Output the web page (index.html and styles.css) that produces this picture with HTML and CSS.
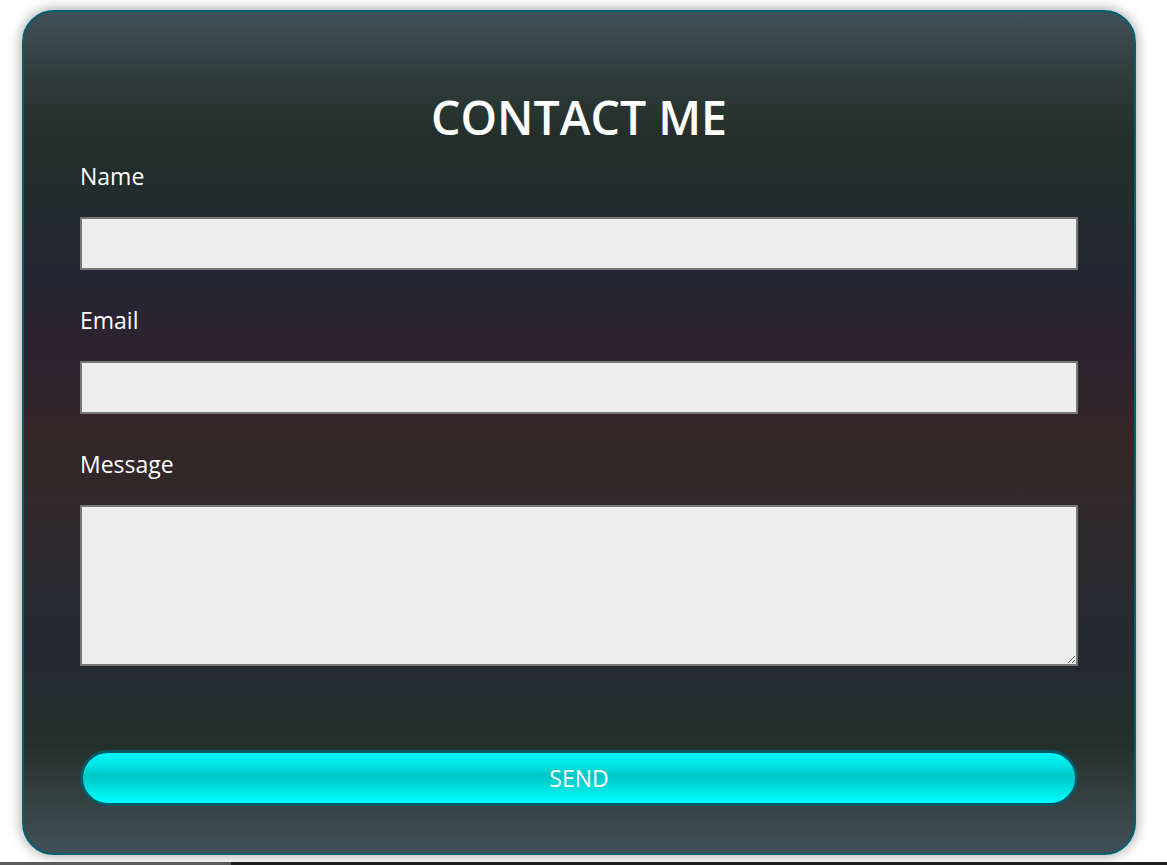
FILE: index.html
```html
<!DOCTYPE html>
<html lang="en">
<head>
<meta charset="utf-8">
<title>Contact Me</title>
<link rel="stylesheet" href="styles.css">
</head>
<body>
<main class="page">
  <form class="contact-card" action="#" onsubmit="return false">
    <h2 class="contact-title">CONTACT ME</h2>
    <div class="field">
      <label class="field-label" for="name">Name</label>
      <input class="field-input" id="name" type="text">
    </div>
    <div class="field">
      <label class="field-label" for="email">Email</label>
      <input class="field-input" id="email" type="email">
    </div>
    <div class="field">
      <label class="field-label" for="message">Message</label>
      <textarea class="field-input field-area" id="message"></textarea>
    </div>
    <button class="send-btn" type="submit">SEND</button>
  </form>
  <div class="track"><div class="track-thumb"></div></div>
</main>
</body>
</html>
```
FILE: styles.css
```css
html, body {
  margin: 0;
  padding: 0;
  background: #ffffff;
}

body {
  font-family: "Open Sans", "Noto Sans", sans-serif;
  overflow: hidden;
}

.page {
  display: flex;
  flex-direction: column;
  padding-top: 10px;
}

.contact-card {
  box-sizing: border-box;
  width: 1114px;
  height: 845px;
  margin-left: 22px;
  padding: 76px 56px 47px;
  display: flex;
  flex-direction: column;
  border: 2px solid #006070;
  border-radius: 32px;
  box-shadow: 0 0 12px 2px rgba(0, 0, 0, 0.3);
  background: linear-gradient(to bottom,
    #415059 0%,
    #2f3c3a 8%,
    #232e29 15%,
    #222b2d 24%,
    #242733 31%,
    #2d2230 40%,
    #332527 50%,
    #30282a 58%,
    #232a31 76%,
    #232f2a 87%,
    #33403f 93%,
    #415059 100%);
}

.contact-title {
  margin: 0 0 15px;
  font-size: 46.5px;
  line-height: 58px;
  font-weight: 600;
  color: #ffffff;
  text-align: center;
}

.field {
  display: flex;
  flex-direction: column;
  margin-bottom: 35px;
}

.field-label {
  font-size: 23px;
  line-height: 30px;
  color: #ffffff;
  margin-bottom: 26px;
}

.field-input {
  box-sizing: border-box;
  width: 100%;
  height: 53px;
  margin: 0;
  border: 2px solid #777777;
  background: #ededed;
  font-family: inherit;
  font-size: 18px;
  padding: 4px 8px;
  outline: none;
}

.field-area {
  height: 161px;
  resize: vertical;
}

.field:last-of-type {
  margin-bottom: 84px;
}

.send-btn {
  box-sizing: border-box;
  width: 100%;
  height: 56px;
  border: 3px solid #055866;
  border-radius: 28px;
  background: linear-gradient(to bottom,
    #00f7f7 0%,
    #00e4e4 25%,
    #00c6c6 45%,
    #00dede 70%,
    #00ffff 100%);
  color: #ffffff;
  font-family: inherit;
  font-size: 23px;
  line-height: 1;
  cursor: pointer;
}

.track {
  margin-top: 7px;
  height: 3px;
  background: #1e1e1e;
  display: flex;
}

.track-thumb {
  width: 231px;
  background: #5a5a5a;
}
```
